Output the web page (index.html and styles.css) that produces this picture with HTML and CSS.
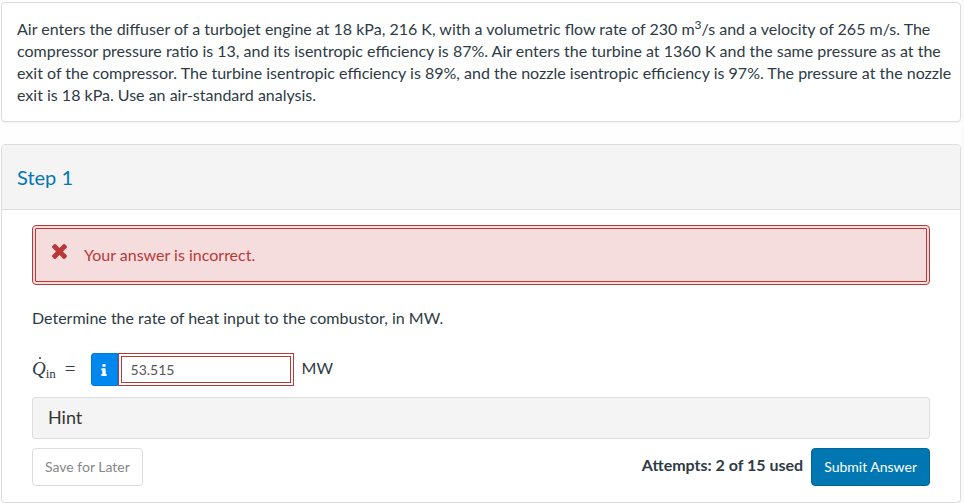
FILE: index.html
```html
<!DOCTYPE html>
<html lang="en">
<head>
    <meta charset="UTF-8">
    <meta name="viewport" content="width=device-width, initial-scale=1.0">
    <title>Step 1</title>
    <link rel="stylesheet" href="styles.css">
</head>
<body>

<main class="page">
    <section class="card problem">
        <p>Air enters the diffuser of a turbojet engine at 18 kPa, 216 K, with a volumetric flow rate of 230 m<sup>3</sup>/s and a velocity of 265 m/s. The compressor pressure ratio is 13, and its isentropic efficiency is 87%. Air enters the turbine at 1360 K and the same pressure as at the exit of the compressor. The turbine isentropic efficiency is 89%, and the nozzle isentropic efficiency is 97%. The pressure at the nozzle exit is 18 kPa. Use an air-standard analysis.</p>
    </section>

    <section class="card step">
        <h2 class="step-title">Step 1</h2>

        <form class="step-body">
            <div class="alert" role="alert">
                <svg class="alert-icon" viewBox="302 366 1188 1188" aria-hidden="true">
                    <path d="M1490 1322q0 40-28 68l-136 136q-28 28-68 28t-68-28l-294-294-294 294q-28 28-68 28t-68-28l-136-136q-28-28-28-68t28-68l294-294-294-294q-28-28-28-68t28-68l136-136q28-28 68-28t68 28l294 294 294-294q28-28 68-28t68 28l136 136q28 28 28 68t-28 68l-294 294 294 294q28 28 28 68z"/>
                </svg>
                <span>Your answer is incorrect.</span>
            </div>

            <p class="question">Determine the rate of heat input to the combustor, in MW.</p>

            <div class="answer">
                <label class="math" for="answer"><i class="dotted">Q</i><sub>in</sub><span class="equals">=</span></label>
                <div class="input-group">
                    <button type="button" class="info" aria-label="Info">
                        <svg viewBox="0 128 640 1408" aria-hidden="true">
                            <path d="M640 1344v128q0 26-19 45t-45 19h-512q-26 0-45-19t-19-45v-128q0-26 19-45t45-19h64v-384h-64q-26 0-45-19t-19-45v-128q0-26 19-45t45-19h384q26 0 45 19t19 45v576h64q26 0 45 19t19 45zm-128-1152v192q0 26-19 45t-45 19h-256q-26 0-45-19t-19-45v-192q0-26 19-45t45-19h256q26 0 45 19t19 45z"/>
                        </svg>
                    </button>
                    <input type="text" id="answer" value="53.515">
                </div>
                <span class="unit">MW</span>
            </div>

            <button type="button" class="hint">Hint</button>

            <div class="actions">
                <button type="button" class="btn">Save for Later</button>
                <span class="attempts">Attempts: 2 of 15 used</span>
                <button type="submit" class="btn btn-primary">Submit Answer</button>
            </div>
        </form>
    </section>
</main>

</body>
</html>
```

FILE: styles.css
```css
* {
    box-sizing: border-box;
}

body {
    margin: 0;
    padding-right: 3px;
    background-color: #fafafa;
    color: #2d3b45;
    font-family: Lato, sans-serif;
    font-size: 16px;
    line-height: 22px;
}

button, input {
    font-family: inherit;
}

p, h2 {
    margin: 0;
}

.page {
    display: flex;
    flex-direction: column;
    gap: 22px;
    padding: 2px 0 0 1px;
    background-color: #fefefe;
}

.card {
    background-color: white;
    border: 1px solid #dddddd;
    border-radius: 4px;
    box-shadow: 0 1px 1px rgba(0, 0, 0, 0.05);
}

.problem {
    padding: 15px 4px 15px 15px;
}

sup {
    font-size: 12px;
    line-height: 0;
    vertical-align: 6px;
}

.step-title {
    padding: 21px 15px;
    border-bottom: 1px solid #dddddd;
    border-radius: 3px 3px 0 0;
    background-color: #f4f4f4;
    color: #0077b3;
    font-size: 20px;
    font-weight: normal;
}

.step-body {
    padding: 15px 30px 16px;
}

.alert {
    display: flex;
    align-items: flex-start;
    gap: 17px;
    padding: 15px 16px;
    border: 4px double #b83838;
    border-radius: 4px;
    background-color: #f5dddd;
    color: #b83838;
}

.alert-icon {
    width: 15px;
    height: 15px;
    fill: #b83838;
}

.question {
    margin: 22px 0 24px;
}

/* Answer row */
.answer {
    display: flex;
    align-items: center;
    gap: 8px;
    margin-bottom: 11px;
}

.math {
    padding-bottom: 2px;
    margin-right: 7px;
    font-family: "Liberation Serif", serif;
    font-size: 19px;
}

/* Time derivative dot over the symbol */
.dotted {
    position: relative;
}

.dotted::before {
    content: "";
    position: absolute;
    top: -1px;
    left: 7px;
    width: 2px;
    height: 2px;
    border-radius: 1px;
    background-color: #2d3b45;
}

.math sub {
    font-size: 13px;
    line-height: 0;
    vertical-align: -3px;
}

.equals {
    margin-left: 9px;
}

.input-group {
    display: flex;
    height: 33px;
}

.info {
    display: flex;
    align-items: center;
    justify-content: center;
    width: 27px;
    padding: 0;
    border: 1px solid #0079db;
    border-radius: 3px 0 0 3px;
    background-color: #0088ee;
}

.info svg {
    width: 6px;
    height: 12px;
    fill: white;
}

.input-group input {
    width: 176px;
    padding: 0 9px;
    border: 4px double #b83838;
    background-color: white;
    color: #555555;
    font-size: 14px;
}

.unit {
    padding-bottom: 4px;
}

.hint {
    display: block;
    width: 100%;
    height: 42px;
    padding: 0 15px 2px;
    border: 1px solid #dddddd;
    border-radius: 3px;
    background-color: #f4f4f4;
    color: #333333;
    font-size: 18px;
    text-align: left;
}

.actions {
    display: flex;
    align-items: center;
    gap: 8px;
    margin-top: 9px;
}

.btn {
    height: 38px;
    padding: 0 12px 2px;
    border: 1px solid #dddddd;
    border-radius: 4px;
    background-color: white;
    color: #888888;
    font-size: 14px;
}

.btn-primary {
    border-color: #006699;
    background-color: #0077b3;
    color: white;
}

.attempts {
    margin-left: auto;
    padding-bottom: 4px;
    font-weight: bold;
}
```
